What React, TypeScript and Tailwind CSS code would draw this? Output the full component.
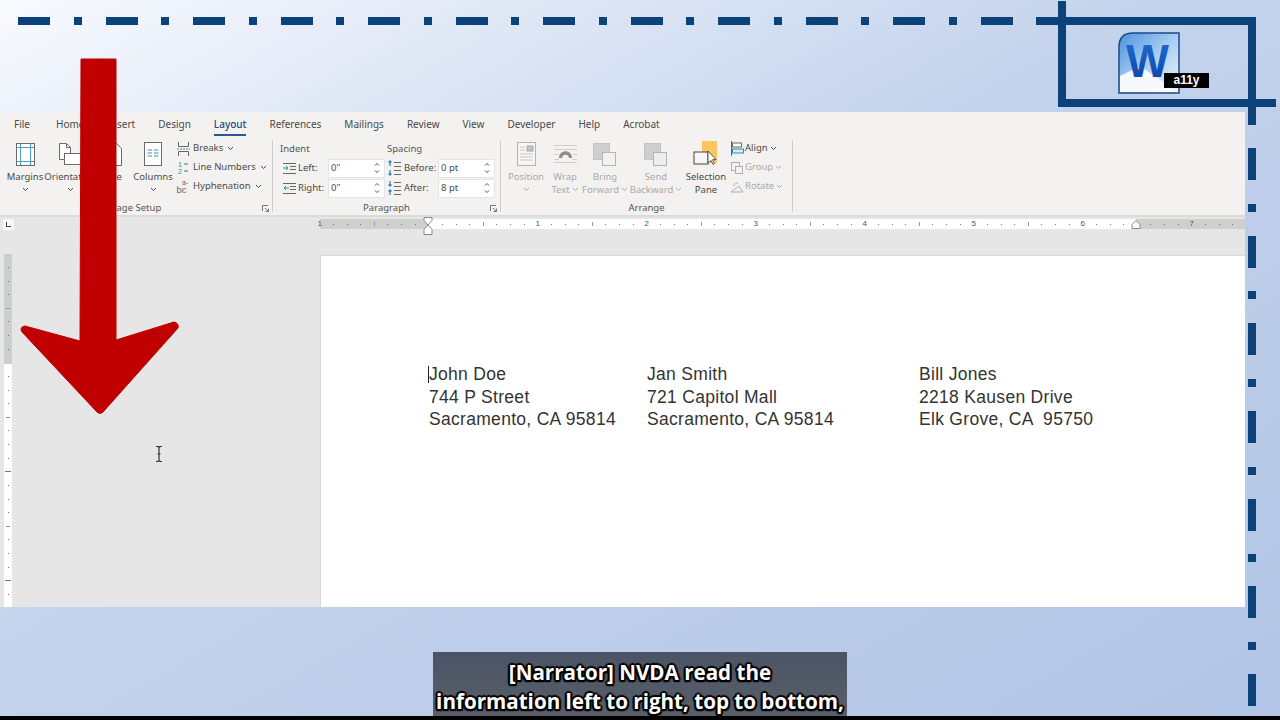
const uiFont = { fontFamily: '"Noto Sans", sans-serif' }

const tabs = ['File', 'Home', 'Insert', 'Design', 'Layout', 'References', 'Mailings', 'Review', 'View', 'Developer', 'Help', 'Acrobat']

function Chevron({ className = '' }: { className?: string }) {
  return (
    <svg width="7" height="5" viewBox="0 0 7 5" className={className}>
      <path d="M1 1l2.500 2.500L6 1" fill="none" stroke="currentColor" strokeWidth="1" />
    </svg>
  )
}

function MarginsIcon() {
  return (
    <svg width="19" height="23" viewBox="0 0 19 23">
      <rect x="0.500" y="0.500" width="18" height="22" fill="#fff" stroke="#6b6b6b" />
      <path d="M1 4.500h17M1 18.500h17M4.500 1v21M14.500 1v21" stroke="#4aa0c0" />
    </svg>
  )
}

function OrientationIcon() {
  return (
    <svg width="24" height="24" viewBox="0 0 24 24">
      <path d="M1.500 1.500h7l4 4v12h-11z" fill="#fff" stroke="#6b6b6b" />
      <path d="M8.500 1.500v4h4" fill="none" stroke="#6b6b6b" />
      <rect x="6.500" y="11.500" width="17" height="11" fill="#fff" stroke="#6b6b6b" />
    </svg>
  )
}

function SizeIcon() {
  return (
    <svg width="18" height="24" viewBox="0 0 18 24">
      <path d="M0.500 0.500h11l6 6v17h-17z" fill="#fff" stroke="#6b6b6b" />
    </svg>
  )
}

function ColumnsIcon() {
  return (
    <svg width="18" height="24" viewBox="0 0 18 24">
      <rect x="0.500" y="0.500" width="17" height="23" fill="#fff" stroke="#6b6b6b" />
      <path d="M3.500 8h4.500M10 8h4.500M3.500 11h4.500M10 11h4.500M3.500 14h4.500M10 14h4.500" stroke="#3f8fb5" />
    </svg>
  )
}

function BreaksIcon() {
  return (
    <svg width="13" height="14" viewBox="0 0 13 14">
      <path d="M1.500 0v4.500h10V0M1.500 14V9.500h10V14" fill="none" stroke="#666" />
      <path d="M0 7h13" stroke="#3f8fb5" strokeDasharray="2 1" />
    </svg>
  )
}

function LineNumbersIcon() {
  return (
    <svg width="13" height="14" viewBox="0 0 13 14">
      <text x="1" y="6" fontSize="7" fill="#2f87b0" fontFamily="Liberation Sans">1</text>
      <text x="1" y="13" fontSize="7" fill="#2f87b0" fontFamily="Liberation Sans">2</text>
      <path d="M7 3h4M7 10h4" stroke="#666" />
    </svg>
  )
}

function HyphenationIcon() {
  return (
    <svg width="14" height="15" viewBox="0 0 14 15">
      <text x="6" y="6" fontSize="7" fill="#666" fontFamily="Liberation Sans">a-</text>
      <text x="0.500" y="14" fontSize="9.500" fill="#666" fontFamily="Liberation Sans">bc</text>
    </svg>
  )
}

function IndentIcon({ flip }: { flip?: boolean }) {
  return (
    <svg width="13" height="11" viewBox="0 0 13 11">
      <path d="M0 .5h13M7 3.500h6M7 6.500h6M0 10.500h13" stroke="#666" />
      <path d={flip ? 'M6 5H1M3 3L1 5l2 2' : 'M0 5h5M3 3l2 2-2 2'} fill="none" stroke="#1f9a8a" />
    </svg>
  )
}

function SpacingIcon({ after }: { after?: boolean }) {
  return (
    <svg width="14" height="16" viewBox="0 0 14 16">
      <path d={after ? 'M3 1v5M1.500 4.500L3 6l1.500-1.500M3 10v5M1.500 11.500L3 10l1.500 1.500' : 'M3 1v5M1.500 2.500L3 1l1.500 1.500M3 10v5M1.500 13.500L3 15l1.500-1.500'} fill="none" stroke="#2f87c0" strokeWidth="1.300" />
      <path d="M7 2.500h7M7 6.500h7M7 10.500h7M7 14.500h7" stroke="#666" />
    </svg>
  )
}

function PositionIcon() {
  return (
    <svg width="19" height="24" viewBox="0 0 19 24">
      <rect x="0.500" y="0.500" width="18" height="23" fill="#f6f6f6" stroke="#b4b4b4" />
      <rect x="10" y="4" width="6" height="5" fill="#c4c4c4" stroke="#a8a8a8" />
      <path d="M3 5h5M3 8h5M3 12h13M3 15h13M3 18h13" stroke="#c8c8c8" />
    </svg>
  )
}

function WrapIcon() {
  return (
    <svg width="23" height="18" viewBox="0 0 23 18">
      <path d="M0 .5h23M0 4.500h23M0 14.500h5M18 14.500h5M0 17.500h23M0 9.500h4M19 9.500h4" stroke="#cfcfcf" />
      <path d="M5 13c0-9 13-9 13 0h-3c0-4.500-7-4.500-7 0z" fill="#8d8d8d" />
    </svg>
  )
}

function StackIcon({ front }: { front?: boolean }) {
  return (
    <svg width="24" height="23" viewBox="0 0 24 23">
      {front ? (
        <>
          <rect x="0.500" y="0.500" width="16" height="16" fill="#cfcfcf" stroke="#c4c4c4" />
          <rect x="9.500" y="9.500" width="13" height="13" fill="#f3f2f1" stroke="#b4b4b4" />
        </>
      ) : (
        <>
          <rect x="0.500" y="0.500" width="16" height="16" fill="#cfcfcf" stroke="#c4c4c4" />
          <rect x="9.500" y="9.500" width="13" height="13" fill="#ededed" stroke="#b4b4b4" />
        </>
      )}
    </svg>
  )
}

function SelectionIcon() {
  return (
    <svg width="26" height="26" viewBox="0 0 26 26">
      <rect x="9" y="0" width="15" height="22" fill="#fcc55f" />
      <rect x="1" y="11" width="14" height="12" fill="#f6f6f6" stroke="#444" />
      <path d="M15 10v12l3-2.500 2 4 1.500-.8-2-4 3.500-.2z" fill="#fff" stroke="#333" strokeWidth=".8" />
    </svg>
  )
}

function AlignIcon() {
  return (
    <svg width="14" height="15" viewBox="0 0 14 15">
      <path d="M1.500 0v15" stroke="#666" />
      <rect x="2.500" y="2" width="9" height="4" fill="#fff" stroke="#666" />
      <rect x="2.500" y="8" width="11" height="4" fill="#d9ecf7" stroke="#2f87c0" />
    </svg>
  )
}

function GroupIcon() {
  return (
    <svg width="14" height="14" viewBox="0 0 14 14">
      <rect x="1.500" y="1.500" width="8" height="8" fill="none" stroke="#b0b0b0" />
      <rect x="5.500" y="5.500" width="7" height="7" fill="#f3f2f1" stroke="#b0b0b0" />
    </svg>
  )
}

function RotateIcon() {
  return (
    <svg width="14" height="12" viewBox="0 0 14 12">
      <path d="M1 11L9 5l4 6zM3 5c1-2 3-3 5-3" fill="none" stroke="#b0b0b0" />
    </svg>
  )
}

function DialogMark() {
  return (
    <svg width="7" height="7" viewBox="0 0 7 7">
      <path d="M.5 6V.5H6M3 3l3.500 3.500M6.500 3.500v3h-3" fill="none" stroke="#777" />
    </svg>
  )
}

function LargeButton({ icon, lines, width, disabled, chevron }: { icon: React.ReactNode; lines: string[]; width: string; disabled?: boolean; chevron?: boolean }) {
  return (
    <div className={`flex flex-col items-center shrink-0 ${width} ${disabled ? 'text-[#a9a9a9]' : 'text-[#4a4a4a]'}`}>
      <div className="h-[32px] flex items-center justify-center">{icon}</div>
      <div className="h-[13px] leading-[13px] whitespace-nowrap">{lines[0]}</div>
      <div className="h-[13px] leading-[13px] whitespace-nowrap flex items-center gap-[2px]">
        {lines[1]}
        {chevron && <Chevron />}
      </div>
    </div>
  )
}

function SmallButton({ icon, label, disabled, gap = 'gap-[3px]' }: { icon: React.ReactNode; label: string; disabled?: boolean; gap?: string }) {
  return (
    <div className={`h-[19px] flex items-center ${gap} whitespace-nowrap ${disabled ? 'text-[#a9a9a9]' : 'text-[#4a4a4a]'}`}>
      <span className="w-[14px] flex justify-center">{icon}</span>
      <span>{label}</span>
      <Chevron className="ml-[1px]" />
    </div>
  )
}

function Spinner({ value }: { value: string }) {
  return (
    <div className="w-[57px] h-[19px] bg-white border border-[#e4e4e4] flex items-center justify-between pl-[2px] pr-[4px] text-[#4a4a4a]">
      <span>{value}</span>
      <svg width="6" height="14" viewBox="0 0 6 14">
        <path d="M1 4.500L3 2.500l2 2M1 9.500l2 2 2-2" fill="none" stroke="#555" />
      </svg>
    </div>
  )
}

function GroupLabel({ label, mark }: { label: string; mark?: boolean }) {
  return (
    <div className="h-[16px] flex items-center justify-center relative text-[#555] translate-y-[1px]">
      <span>{label}</span>
      {mark && (
        <span className="absolute right-[3px] top-[5px] flex">
          <DialogMark />
        </span>
      )}
    </div>
  )
}

function Separator() {
  return <div className="w-px h-[72px] mt-[3px] shrink-0 bg-[#cfcecc]" />
}

function HorizontalRuler() {
  const slots = Array.from({ length: 68 }, (_, i) => i)
  return (
    <div className="grid h-[10px] ml-[313px] mt-[2px] w-[932px] overflow-hidden">
      <div className="col-start-1 row-start-1 flex">
        <div className="w-[7px]" />
        <div className="w-[108px] bg-[#cfcfcd]" />
        <div className="w-[708px] bg-white" />
        <div className="w-[109px] bg-[#cfcfcd]" />
      </div>
      <div className="col-start-1 row-start-1 flex text-[#555] text-[8px] leading-[10px]" style={{ fontFamily: '"Liberation Sans", sans-serif' }}>
        {slots.map((i) => {
          const label = i === 0 ? '1' : i % 8 === 0 && i > 8 ? String(i / 8 - 1) : ''
          return (
            <div key={i} className="w-[13.625px] h-[10px] shrink-0 flex items-center justify-center">
              {label ? <span>{label}</span> : i === 8 ? null : i % 4 === 0 ? <span className="w-px h-[4px] bg-[#999]" /> : <span className="w-px h-px bg-[#777]" />}
            </div>
          )
        })}
      </div>
    </div>
  )
}

function VerticalRuler() {
  const slots = Array.from({ length: 26 }, (_, i) => i)
  return (
    <div className="grid w-[8px] ml-[4px] mt-[23px] h-[353px] overflow-hidden">
      <div className="col-start-1 row-start-1 flex flex-col">
        <div className="h-[110px] bg-[#cdcfca]" />
        <div className="flex-1 bg-white" />
      </div>
      <div className="col-start-1 row-start-1 flex flex-col -mt-[7px]">
        {slots.map((i) => (
          <div key={i} className="h-[13.625px] shrink-0 flex items-center justify-center">
            {i % 8 === 0 && i !== 8 ? <span className="w-[6px] h-px bg-[#777]" /> : i === 8 ? null : i % 4 === 0 ? <span className="w-[4px] h-px bg-[#999]" /> : <span className="w-px h-px bg-[#777]" />}
          </div>
        ))}
      </div>
    </div>
  )
}

function WordLogo() {
  return (
    <svg width="62" height="62" viewBox="0 0 62 62">
      <defs>
        <linearGradient id="tile" x1="0" y1="0" x2="1" y2="1">
          <stop offset="0" stopColor="#4a92dd" />
          <stop offset="0.5" stopColor="#a8cdf2" />
          <stop offset="1" stopColor="#f2f6fb" />
        </linearGradient>
        <linearGradient id="letter" x1="0" y1="0" x2="0" y2="1">
          <stop offset="0" stopColor="#1f6fd0" />
          <stop offset="1" stopColor="#0a42a8" />
        </linearGradient>
      </defs>
      <path d="M15 1h46v60H1V15Q1 1 15 1z" fill="url(#tile)" stroke="#1d4a88" strokeWidth="1.500" />
      <path d="M2 60V44l20-10 38 26z" fill="#f6f8fc" />
      <text x="8" y="45" fontSize="46" fontWeight="700" fontFamily="Liberation Sans" fill="url(#letter)" textLength="43" lengthAdjust="spacingAndGlyphs">W</text>
    </svg>
  )
}

export default function App() {
  const addresses = [
    { width: 'w-[218px]', lines: ['John Doe', '744 P Street', 'Sacramento, CA 95814'] },
    { width: 'w-[272px]', lines: ['Jan Smith', '721 Capitol Mall', 'Sacramento, CA 95814'] },
    { width: 'w-[300px]', lines: ['Bill Jones', '2218 Kausen Drive', 'Elk Grove, CA  95750'] },
  ]

  return (
    <div className="relative w-[1280px] h-[720px] overflow-hidden flex flex-col bg-gradient-to-br from-[#f8fafe] via-[#c4d3ec] via-45% to-[#b2c5e6]">
      <div className="h-[112px] shrink-0" />

      {/* Word window */}
      <div className="w-[1245px] h-[495px] shrink-0 flex flex-col bg-[#e6e6e7] text-[9.500px]" style={uiFont}>
        <div className="h-[25px] bg-[#f3f2f0] flex items-center pl-[14px] gap-[23px] text-[10px] text-[#4a4a4a]">
          {tabs.map((t) => (
            <div key={t} className={`relative h-[25px] leading-[25px] ${t === 'Layout' ? 'text-[#24497f] font-medium' : ''} ${t === 'Home' ? 'ml-[3px]' : ''}`}>
              {t}
              {t === 'Layout' && <span className="absolute left-0 right-0 bottom-[1px] h-[2px] bg-[#2b579a]" />}
            </div>
          ))}
        </div>

        {/* Ribbon groups */}
        <div className="h-[80px] bg-[#f3f2f0] border-b-2 border-[#dcdbd9] flex">
          <div className="w-[272px] shrink-0 flex flex-col">
            <div className="flex-1 flex pl-[6px] pt-[1px]">
              <LargeButton icon={<MarginsIcon />} lines={['Margins', '']} width="w-[38px]" chevron />
              <LargeButton icon={<OrientationIcon />} lines={['Orientation', '']} width="w-[50px] ml-[1px]" chevron />
              <LargeButton icon={<SizeIcon />} lines={['Size', '']} width="w-[36px]" chevron />
              <LargeButton icon={<ColumnsIcon />} lines={['Columns', '']} width="w-[38px] ml-[3px]" chevron />
              <div className="flex flex-col ml-[4px] pt-[1px]">
                <SmallButton icon={<BreaksIcon />} label="Breaks" />
                <SmallButton icon={<LineNumbersIcon />} label="Line Numbers" />
                <SmallButton icon={<HyphenationIcon />} label="Hyphenation" />
              </div>
            </div>
            <GroupLabel label="Page Setup" mark />
          </div>
          <Separator />

          <div className="w-[227px] shrink-0 flex flex-col">
            <div className="flex-1 flex pl-[7px] pt-[3px]">
              <div className="w-[107px] shrink-0">
                <div className="h-[18px] leading-[18px] text-[#555]">Indent</div>
                <div className="h-[20px] flex items-center text-[#4a4a4a]">
                  <span className="w-[14px] ml-[3px] flex"><IndentIcon /></span>
                  <span className="w-[31px] pl-[1px]">Left:</span>
                  <Spinner value={'0"'} />
                </div>
                <div className="h-[20px] flex items-center text-[#4a4a4a]">
                  <span className="w-[14px] ml-[3px] flex"><IndentIcon flip /></span>
                  <span className="w-[31px] pl-[1px]">Right:</span>
                  <Spinner value={'0"'} />
                </div>
              </div>
              <div>
                <div className="h-[18px] leading-[18px] text-[#555]">Spacing</div>
                <div className="h-[20px] flex items-center text-[#4a4a4a]">
                  <span className="w-[17px] flex"><SpacingIcon /></span>
                  <span className="w-[34px]">Before:</span>
                  <Spinner value="0 pt" />
                </div>
                <div className="h-[20px] flex items-center text-[#4a4a4a]">
                  <span className="w-[17px] flex"><SpacingIcon after /></span>
                  <span className="w-[34px]">After:</span>
                  <Spinner value="8 pt" />
                </div>
              </div>
            </div>
            <GroupLabel label="Paragraph" mark />
          </div>
          <Separator />

          <div className="w-[291px] shrink-0 flex flex-col">
            <div className="flex-1 flex pl-[8px] pt-[1px]">
              <LargeButton icon={<PositionIcon />} lines={['Position', '']} width="w-[34px]" disabled chevron />
              <LargeButton icon={<WrapIcon />} lines={['Wrap', 'Text']} width="w-[30px] ml-[7px]" disabled chevron />
              <LargeButton icon={<StackIcon front />} lines={['Bring', 'Forward']} width="w-[44px] ml-[3px]" disabled chevron />
              <LargeButton icon={<StackIcon />} lines={['Send', 'Backward']} width="w-[50px] ml-[4px]" disabled chevron />
              <LargeButton icon={<SelectionIcon />} lines={['Selection', 'Pane']} width="w-[42px] ml-[4px]" />
              <div className="flex flex-col ml-[3px] pt-[1px]">
                <SmallButton icon={<AlignIcon />} label="Align" gap="gap-[1px]" />
                <SmallButton icon={<GroupIcon />} label="Group" gap="gap-[1px]" disabled />
                <SmallButton icon={<RotateIcon />} label="Rotate" gap="gap-[1px]" disabled />
              </div>
            </div>
            <GroupLabel label="Arrange" />
          </div>
          <Separator />
        </div>

        {/* Ruler row */}
        <div className="h-[14px] shrink-0 relative">
          <HorizontalRuler />
          <div className="absolute left-[3px] top-[2px] w-[11px] h-[11px] bg-[#f8f8f8] flex items-center justify-center">
            <span className="w-[5px] h-[5px] border-l border-b border-[#444]" />
          </div>
          <svg width="10" height="18" viewBox="0 0 10 18" className="absolute left-[423px] top-0">
            <path d="M1 .5h8v3L5 8 1 3.500z" fill="#fff" stroke="#888" />
            <path d="M5 8l4 4.500v5H1v-5z" fill="#fff" stroke="#888" />
          </svg>
          <svg width="10" height="9" viewBox="0 0 10 9" className="absolute left-[1131px] top-[3px]">
            <path d="M5 .5l4 4v4H1v-4z" fill="#fff" stroke="#888" />
          </svg>
        </div>

        {/* Document area */}
        <div className="flex-1 flex min-h-0">
          <div className="w-[320px] shrink-0">
            <VerticalRuler />
          </div>
          <div className="flex-1 pt-[24px]">
            <div className="h-[352px] bg-white border-t border-l border-[#d9d9d9] pl-[108px] pt-[107px] flex text-[#333] text-[17.500px] tracking-[0.3px] leading-[22.500px]" style={{ fontFamily: '"Liberation Sans", sans-serif' }}>
              {addresses.map((a) => (
                <div key={a.lines[0]} className={`${a.width} shrink-0`}>
                  {a.lines.map((l, i) => (
                    <div key={i} className="whitespace-pre">{l}</div>
                  ))}
                </div>
              ))}
            </div>
          </div>
        </div>
      </div>

      {/* Caption */}
      <div className="flex-1 flex items-end justify-center">
        <div className="w-[414px] h-[64px] bg-gradient-to-b from-[#4a5466] to-[#5a5f68] flex flex-col items-center pt-[6px] text-white text-[20.600px] leading-[28.500px] font-bold whitespace-nowrap [text-shadow:2px_0_1px_#000,-2px_0_1px_#000,0_2px_1px_#000,0_-2px_1px_#000,1.500px_1.500px_1px_#000,-1.500px_-1.500px_1px_#000,1.500px_-1.500px_1px_#000,-1.500px_1.500px_1px_#000]" style={{ fontFamily: '"Open Sans", sans-serif' }}>
          <div>[Narrator] NVDA read the</div>
          <div>information left to right, top to bottom,</div>
        </div>
      </div>
      <div className="h-[4px] shrink-0 bg-black" />

      {/* Dashed frame drawn over the slide */}
      <div className="absolute left-[18px] top-[17px] flex items-center gap-[23.750px]">
        {Array.from({ length: 12 }, (_, i) => (
          <div key={i} className="flex items-center gap-[23.750px]">
            <div className="w-[32px] h-[8px] bg-[#0b4279]" />
            <div className="w-[8px] h-[8px] bg-[#0b4279]" />
          </div>
        ))}
      </div>
      <div className="absolute left-[1248px] top-[116px] flex flex-col items-center gap-[23.850px]">
        {Array.from({ length: 7 }, (_, i) => (
          <div key={i} className="flex flex-col items-center gap-[23.850px]">
            <div className="w-[8px] h-[8px] bg-[#0b4279]" />
            <div className="w-[8px] h-[32px] bg-[#0b4279]" />
          </div>
        ))}
      </div>
      <div className="absolute left-[1036px] top-[17px] w-[30px] h-[8px] bg-[#0b4279]" />
      <div className="absolute left-[1058px] top-[1px] w-[8px] h-[106px] bg-[#0b4279]" />
      <div className="absolute left-[1058px] top-[17px] w-[198px] h-[8px] bg-[#0b4279]" />
      <div className="absolute left-[1058px] top-[99px] w-[218px] h-[8px] bg-[#0b4279]" />
      <div className="absolute left-[1248px] top-[17px] w-[8px] h-[108px] bg-[#0b4279]" />

      <div className="absolute left-[1118px] top-[32px] flex">
        <WordLogo />
      </div>
      <div className="absolute left-[1164px] top-[73px] w-[45px] h-[15px] bg-black text-white text-[12px] leading-[15px] text-center font-bold" style={{ fontFamily: '"Liberation Sans", sans-serif' }}>
        a11y
      </div>

      {/* Red arrow */}
      <svg width="200" height="380" viewBox="0 0 200 380" className="absolute left-0 top-[50px]">
        <path d="M81 9h35v281l58-18q5 1 4 6L103 362q-3 3-6 0L22 282q-3-5 3-6l55 15z" fill="#c00000" stroke="#c00000" strokeLinejoin="round" />
      </svg>

      {/* I-beam cursor */}
      <svg width="8" height="16" viewBox="0 0 8 16" className="absolute left-[155px] top-[446px]">
        <path d="M1 .5h2l1 1 1-1h2M4 1.500v13M1 15.500h2l1-1 1 1h2M2.500 8h3" fill="none" stroke="#333" strokeWidth="1.200" />
      </svg>

      {/* Caret */}
      <div className="absolute left-[428px] top-[366px] w-px h-[17px] bg-[#222]" />
    </div>
  )
}
